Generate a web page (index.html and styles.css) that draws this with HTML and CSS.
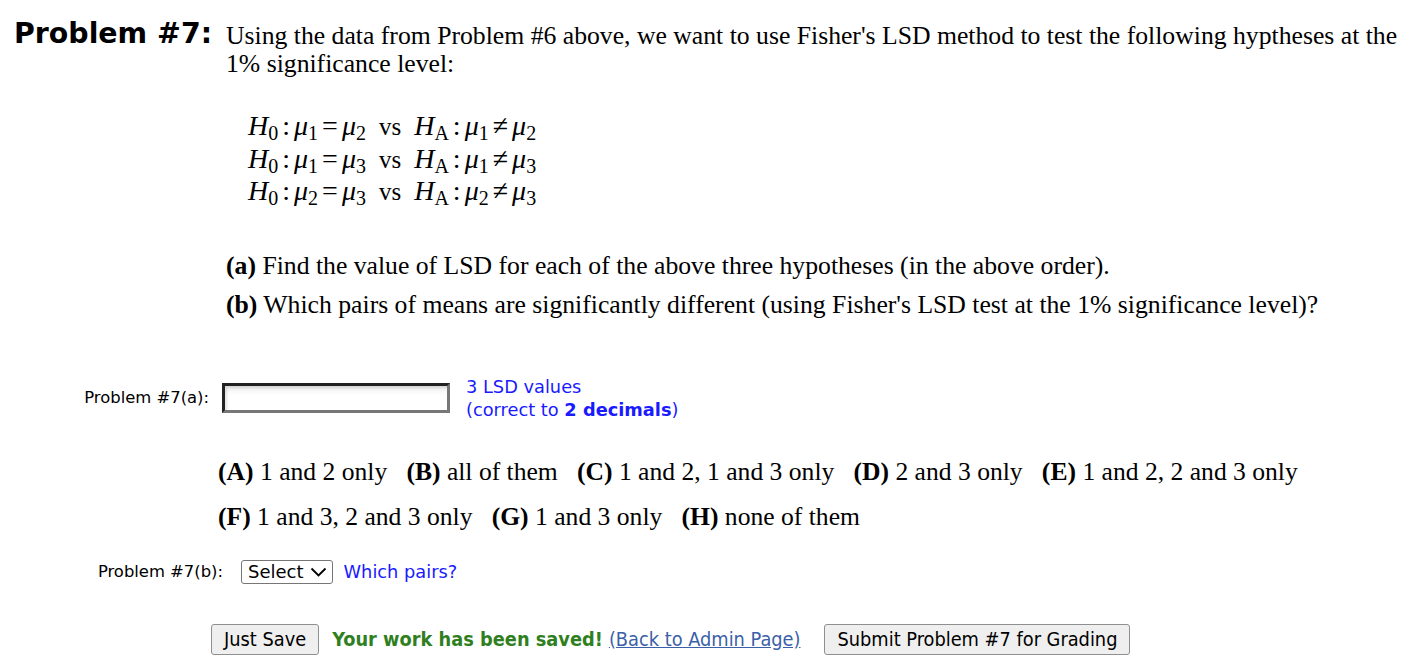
FILE: index.html
```html
<!DOCTYPE html>
<html lang="en">
<head>
  <meta charset="UTF-8">
  <title>Problem #7</title>
  <link rel="stylesheet" href="styles.css">
</head>
<body>
  <div class="problem">
    <div class="title">Problem #7:</div>
    <div class="text">
      <p class="intro">Using the data from Problem #6 above, we want to use Fisher's LSD method to test the following hyptheses at the 1% significance level:</p>

      <div class="hyp">
        <div class="hline"><i>H</i><sub>0</sub><span class="op">:</span><i>μ</i><sub>1</sub><span class="op">=</span><i>μ</i><sub>2</sub><span class="vs">vs</span><i>H</i><sub>A</sub><span class="op">:</span><i>μ</i><sub>1</sub><span class="op">≠</span><i>μ</i><sub>2</sub></div>
        <div class="hline"><i>H</i><sub>0</sub><span class="op">:</span><i>μ</i><sub>1</sub><span class="op">=</span><i>μ</i><sub>3</sub><span class="vs">vs</span><i>H</i><sub>A</sub><span class="op">:</span><i>μ</i><sub>1</sub><span class="op">≠</span><i>μ</i><sub>3</sub></div>
        <div class="hline"><i>H</i><sub>0</sub><span class="op">:</span><i>μ</i><sub>2</sub><span class="op">=</span><i>μ</i><sub>3</sub><span class="vs">vs</span><i>H</i><sub>A</sub><span class="op">:</span><i>μ</i><sub>2</sub><span class="op">≠</span><i>μ</i><sub>3</sub></div>
      </div>

      <p class="part"><b>(a)</b> Find the value of LSD for each of the above three hypotheses (in the above order).</p>
      <p class="part"><b>(b)</b> Which pairs of means are significantly different (using Fisher's LSD test at the 1% significance level)?</p>
    </div>
  </div>

  <div class="row row-a">
    <label class="label label-a">Problem #7(a):</label>
    <input type="text" class="answer">
    <div class="hint">3 LSD values<br>(correct to <b>2 decimals</b>)</div>
  </div>

  <div class="choices">
    <p><b>(A)</b> 1 and 2 only &nbsp; <b>(B)</b> all of them &nbsp; <b>(C)</b> 1 and 2, 1 and 3 only &nbsp; <b>(D)</b> 2 and 3 only &nbsp; <b>(E)</b> 1 and 2, 2 and 3 only</p>
    <p><b>(F)</b> 1 and 3, 2 and 3 only &nbsp; <b>(G)</b> 1 and 3 only &nbsp; <b>(H)</b> none of them</p>
  </div>

  <div class="row row-b">
    <label class="label label-b">Problem #7(b):</label>
    <div class="select">Select
      <svg width="17" height="10" viewBox="0 0 17 10"><path d="M1.5 1.5 L8.5 8.5 L15.5 1.5" fill="none" stroke="#000" stroke-width="1.8"/></svg>
    </div>
    <span class="hint">Which pairs?</span>
  </div>

  <div class="buttons">
    <button class="btn">Just Save</button>
    <span class="saved">Your work has been saved!</span>
    <a href="#" class="back">(Back to Admin Page)</a>
    <button class="btn submit">Submit Problem #7 for Grading</button>
  </div>
</body>
</html>
```

FILE: styles.css
```css
body {
  margin: 0;
  background: #fff;
  color: #000;
  font-family: "DejaVu Sans", Verdana, sans-serif;
}
.problem {
  display: flex;
  padding: 16px 0 0 14px;
}
.title {
  font-weight: bold;
  font-size: 28.4px;
  width: 212px;
  flex-shrink: 0;
  line-height: 36px;
}
.text {
  font-family: "Liberation Serif", "Times New Roman", serif;
  font-size: 25.7px;
}
.intro {
  margin: 6px 0 0 0;
  line-height: 28px;
}
.hyp {
  margin: 32px 0 0 22px;
  font-size: 28px;
}
.hline {
  height: 32.5px;
  line-height: 32.5px;
  white-space: nowrap;
}
.hyp sub {
  font-size: 20px;
  vertical-align: -5px;
  line-height: 0;
}
.hyp .op {
  margin: 0 4px;
}
.hyp .vs {
  font-size: 25px;
  margin: 0 13px;
}
.part {
  margin: 0;
  line-height: 39px;
}
.hyp + .part {
  margin-top: 38px;
}
.row {
  display: flex;
  align-items: center;
  font-size: 16.4px;
}
.row-a {
  margin-top: 51px;
}
.label-a {
  width: 209px;
  text-align: right;
  margin-right: 13px;
}
.answer {
  box-sizing: border-box;
  width: 228px;
  height: 30px;
  border: 3px solid #222;
  border-bottom-color: #777;
  border-right-color: #777;
  padding: 0;
  margin: 0 16px 0 0;
  background: linear-gradient(#f0f0f0, #fff 40%);
  box-shadow: inset 2px 2px 3px rgba(0, 0, 0, 0.12);
}
.hint {
  color: #1a1aff;
  font-size: 17.8px;
  line-height: 23px;
}
.choices {
  margin: 28px 0 0 218px;
  font-family: "Liberation Serif", "Times New Roman", serif;
  font-size: 25.6px;
}
.choices p {
  margin: 0;
  line-height: 45px;
}
.row-b {
  margin-top: 21px;
}
.label-b {
  width: 223px;
  text-align: right;
  margin-right: 18px;
}
.select {
  display: flex;
  align-items: center;
  gap: 6px;
  height: 22px;
  padding: 0 5px 0 6px;
  border: 1px solid #767676;
  border-radius: 3px;
  font-size: 18px;
  margin-right: 11px;
}
.buttons {
  display: flex;
  align-items: center;
  margin: 40px 0 0 211px;
  font-family: "DejaVu Sans Condensed", "DejaVu Sans", sans-serif;
  font-size: 19.8px;
}
.btn {
  font-family: "DejaVu Sans Condensed", "DejaVu Sans", sans-serif;
  font-size: 19.8px;
  height: 31px;
  padding: 0 12px;
  background: #efefef;
  border: 1px solid #8f8f8f;
  border-radius: 3px;
  color: #000;
}
.saved {
  color: #2f7f1f;
  font-weight: bold;
  margin-left: 13px;
}
.back {
  color: #3b5fa8;
  margin-left: 6px;
}
.submit {
  margin-left: 24px;
}
```
